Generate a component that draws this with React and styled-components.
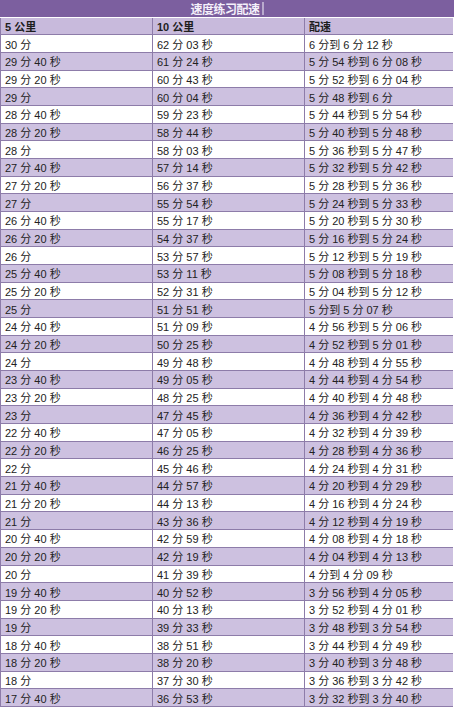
import styled, { createGlobalStyle } from "styled-components";

const GlobalStyle = createGlobalStyle`
  html, body {
    margin: 0;
    padding: 0;
    background: #ffffff;
  }
`;

const rows = [
  ["30 分", "62 分 03 秒", "6 分到 6 分 12 秒"],
  ["29 分 40 秒", "61 分 24 秒", "5 分 54 秒到 6 分 08 秒"],
  ["29 分 20 秒", "60 分 43 秒", "5 分 52 秒到 6 分 04 秒"],
  ["29 分", "60 分 04 秒", "5 分 48 秒到 6 分"],
  ["28 分 40 秒", "59 分 23 秒", "5 分 44 秒到 5 分 54 秒"],
  ["28 分 20 秒", "58 分 44 秒", "5 分 40 秒到 5 分 48 秒"],
  ["28 分", "58 分 03 秒", "5 分 36 秒到 5 分 47 秒"],
  ["27 分 40 秒", "57 分 14 秒", "5 分 32 秒到 5 分 42 秒"],
  ["27 分 20 秒", "56 分 37 秒", "5 分 28 秒到 5 分 36 秒"],
  ["27 分", "55 分 54 秒", "5 分 24 秒到 5 分 33 秒"],
  ["26 分 40 秒", "55 分 17 秒", "5 分 20 秒到 5 分 30 秒"],
  ["26 分 20 秒", "54 分 37 秒", "5 分 16 秒到 5 分 24 秒"],
  ["26 分", "53 分 57 秒", "5 分 12 秒到 5 分 19 秒"],
  ["25 分 40 秒", "53 分 11 秒", "5 分 08 秒到 5 分 18 秒"],
  ["25 分 20 秒", "52 分 31 秒", "5 分 04 秒到 5 分 12 秒"],
  ["25 分", "51 分 51 秒", "5 分到 5 分 07 秒"],
  ["24 分 40 秒", "51 分 09 秒", "4 分 56 秒到 5 分 06 秒"],
  ["24 分 20 秒", "50 分 25 秒", "4 分 52 秒到 5 分 01 秒"],
  ["24 分", "49 分 48 秒", "4 分 48 秒到 4 分 55 秒"],
  ["23 分 40 秒", "49 分 05 秒", "4 分 44 秒到 4 分 54 秒"],
  ["23 分 20 秒", "48 分 25 秒", "4 分 40 秒到 4 分 48 秒"],
  ["23 分", "47 分 45 秒", "4 分 36 秒到 4 分 42 秒"],
  ["22 分 40 秒", "47 分 05 秒", "4 分 32 秒到 4 分 39 秒"],
  ["22 分 20 秒", "46 分 25 秒", "4 分 28 秒到 4 分 36 秒"],
  ["22 分", "45 分 46 秒", "4 分 24 秒到 4 分 31 秒"],
  ["21 分 40 秒", "44 分 57 秒", "4 分 20 秒到 4 分 29 秒"],
  ["21 分 20 秒", "44 分 13 秒", "4 分 16 秒到 4 分 24 秒"],
  ["21 分", "43 分 36 秒", "4 分 12 秒到 4 分 19 秒"],
  ["20 分 40 秒", "42 分 59 秒", "4 分 08 秒到 4 分 18 秒"],
  ["20 分 20 秒", "42 分 19 秒", "4 分 04 秒到 4 分 13 秒"],
  ["20 分", "41 分 39 秒", "4 分到 4 分 09 秒"],
  ["19 分 40 秒", "40 分 52 秒", "3 分 56 秒到 4 分 05 秒"],
  ["19 分 20 秒", "40 分 13 秒", "3 分 52 秒到 4 分 01 秒"],
  ["19 分", "39 分 33 秒", "3 分 48 秒到 3 分 54 秒"],
  ["18 分 40 秒", "38 分 51 秒", "3 分 44 秒到 4 分 49 秒"],
  ["18 分 20 秒", "38 分 20 秒", "3 分 40 秒到 3 分 48 秒"],
  ["18 分", "37 分 30 秒", "3 分 36 秒到 3 分 42 秒"],
  ["17 分 40 秒", "36 分 53 秒", "3 分 32 秒到 3 分 40 秒"],
];

function App() {
  return (
    <>
      <GlobalStyle />
      <Table>
        <Title>
          速度练习配速<Caret />
        </Title>
        <HeadCell>5 公里</HeadCell>
        <HeadCell>10 公里</HeadCell>
        <HeadCell>配速</HeadCell>
        {rows.map((row, i) =>
          row.map((text, j) => (
            <Cell key={`${i}-${j}`} $alt={i % 2 === 1}>
              {text}
            </Cell>
          ))
        )}
      </Table>
    </>
  );
}

const Table = styled.div`
  display: grid;
  grid-template-columns: 151px 151px 148px;
  grid-auto-rows: 16.68px;
  gap: 1px;
  width: 453px;
  padding: 0 1px 1px 1px;
  box-sizing: border-box;
  background: #8d7ca9;
  font-family: "Liberation Sans", "Noto Sans CJK SC", sans-serif;
  font-size: 11px;
  color: #222222;
`;

const Title = styled.div`
  grid-column: 1 / -1;
  margin: 0 -1px;
  display: flex;
  align-items: center;
  justify-content: center;
  background: #7c5f9f;
  color: #f4f0fa;
  font-weight: bold;
  font-size: 12px;
  letter-spacing: -0.5px;
  border-bottom: 1px solid #ffffff;
  margin-bottom: -1px;
`;

const Caret = styled.span`
  display: inline-block;
  width: 2px;
  height: 13px;
  margin-left: 2px;
  background: #b9aacd;
`;

const Cell = styled.div`
  display: flex;
  align-items: center;
  padding-left: 4px;
  white-space: nowrap;
  overflow: hidden;
  background: ${(p) => (p.$alt ? "#cdc1e0" : "#ffffff")};
`;

const HeadCell = styled(Cell)`
  background: #c8badc;
  font-weight: bold;
  color: #1e1e1e;
`;

export default App;
